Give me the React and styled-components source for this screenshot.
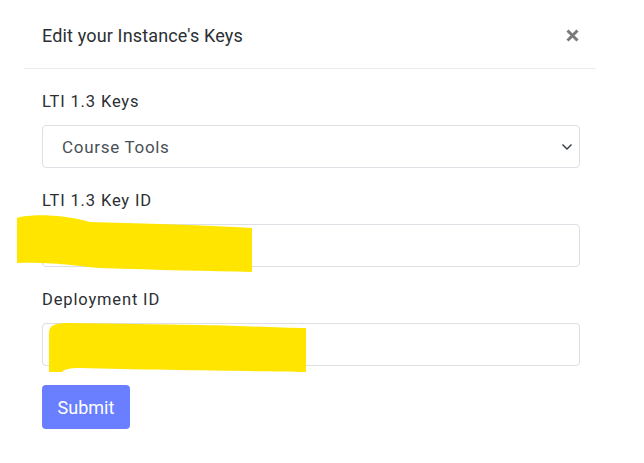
import React from "react";
import styled, { createGlobalStyle } from "styled-components";

const Global = createGlobalStyle`
  html, body { margin: 0; padding: 0; background: #fff; }
  body { font-family: Roboto, "Liberation Sans", Arial, sans-serif; color: #212529; }
  * { box-sizing: border-box; }
`;

const Modal = styled.div`
  margin-left: 24px;
  width: 572px;
  background: #fff;
`;

const Header = styled.div`
  display: flex;
  align-items: center;
  justify-content: space-between;
  padding: 22px 17px 19px 18px;
  border-bottom: 1px solid #e9ecef;
`;

const Title = styled.h5`
  margin: 0;
  font-size: 18px;
  line-height: 27px;
  font-weight: 400;
  letter-spacing: 0.15px;
  color: #2b2f33;
`;

const Close = styled.button`
  border: 0;
  background: transparent;
  padding: 0;
  width: 13px;
  height: 13px;
  display: flex;
  cursor: pointer;
`;

const Body = styled.form`
  padding: 21px 16px 0 18px;
  display: flex;
  flex-direction: column;
`;

const Group = styled.div`
  display: flex;
  flex-direction: column;
  margin-bottom: ${(p) => p.$mb || 21}px;
`;

const Label = styled.label`
  font-size: 16.5px;
  line-height: 24px;
  letter-spacing: 0.85px;
  margin-bottom: 11px;
  color: #2b2f33;
`;

const FieldWrap = styled.div`
  position: relative;
  height: 43px;
`;

const SelectBox = styled.div`
  height: 43px;
  border: 1px solid #dcdfe3;
  border-radius: 4px;
  display: flex;
  align-items: center;
  justify-content: space-between;
  padding: 0 6px 0 19px;
  font-size: 17px;
  letter-spacing: 0.7px;
  color: #495057;
`;

const Input = styled.input`
  width: 100%;
  height: 43px;
  border: 1px solid #dcdfe3;
  border-radius: 4px;
  padding: 0 19px;
  font-size: 17px;
  font-family: inherit;
  outline: none;
`;

const Scribble = styled.svg`
  position: absolute;
  left: 0;
  top: 0;
  width: 100%;
  height: 100%;
  overflow: visible;
  pointer-events: none;
`;

const SubmitButton = styled.button`
  align-self: flex-start;
  width: 88px;
  height: 44px;
  border: 0;
  border-radius: 4px;
  background: #6a7fff;
  color: #fff;
  font-family: inherit;
  font-size: 18px;
  cursor: pointer;
`;

export default function App() {
  return (
    <>
      <Global />
      <Modal>
        <Header>
          <Title>Edit your Instance's Keys</Title>
          <Close type="button" aria-label="Close">
            <svg width="13" height="13" viewBox="0 0 13 13">
              <path d="M1.5 1.5 L11.5 11.5 M11.5 1.5 L1.5 11.5" stroke="#7a7a7a" strokeWidth="3" strokeLinecap="butt" />
            </svg>
          </Close>
        </Header>
        <Body onSubmit={(e) => e.preventDefault()}>
          <Group>
            <Label>LTI 1.3 Keys</Label>
            <SelectBox>
              <span>Course Tools</span>
              <svg width="12" height="8" viewBox="0 0 12 8">
                <path d="M1.5 1.5 L6 6 L10.5 1.5" fill="none" stroke="#343a40" strokeWidth="1.4" />
              </svg>
            </SelectBox>
          </Group>
          <Group>
            <Label>LTI 1.3 Key ID</Label>
            <FieldWrap>
              <Input type="text" />
              <Scribble>
                <path
                  d="M-25,-6 C-12,-10 18,-10 48,-2 L118,0 C158,1 188,3 210,4 L210,48 C168,47 118,46 58,44 C38,43 18,38 -25,39 Z"
                  fill="#ffe500"
                />
              </Scribble>
            </FieldWrap>
          </Group>
          <Group $mb={19}>
            <Label>Deployment ID</Label>
            <FieldWrap>
              <Input type="text" />
              <Scribble>
                <path
                  d="M7,10 C7,2 13,0 28,0 L158,2 C208,3 238,5 264,5 L264,49 C208,48 108,47 38,45 C28,45 23,46 20,49 L7,49 Z"
                  fill="#ffe500"
                />
              </Scribble>
            </FieldWrap>
          </Group>
          <SubmitButton type="submit">Submit</SubmitButton>
        </Body>
      </Modal>
    </>
  );
}
